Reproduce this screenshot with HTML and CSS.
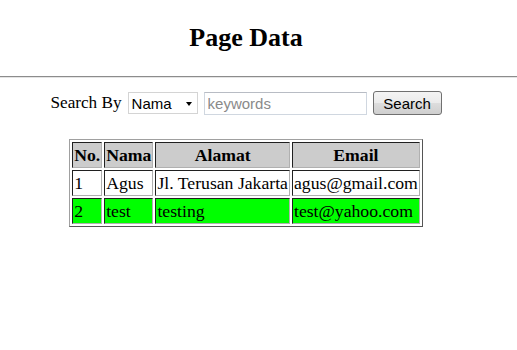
FILE: index.html
```html
<!DOCTYPE html>
<html>
<head>
<meta charset="utf-8">
<title>Page Data</title>
<link rel="stylesheet" href="styles.css">
</head>
<body>
<div class="page">
  <h1 class="title">Page Data</h1>
</div>
<hr class="rule">
<div class="page">
  <form class="search">
    <span class="label">Search By</span>
    <span class="select-wrap">
      <select class="select">
        <option>Nama</option>
        <option>Alamat</option>
        <option>Email</option>
      </select>
      <span class="arrow"></span>
    </span>
    <input class="keywords" type="text" placeholder="keywords">
    <button class="btn" type="button">Search</button>
  </form>
  <table class="data">
    <thead>
      <tr class="head">
        <th>No.</th>
        <th>Nama</th>
        <th>Alamat</th>
        <th>Email</th>
      </tr>
    </thead>
    <tbody>
      <tr class="row">
        <td>1</td>
        <td>Agus</td>
        <td>Jl. Terusan Jakarta</td>
        <td>agus@gmail.com</td>
      </tr>
      <tr class="row alt">
        <td>2</td>
        <td>test</td>
        <td>testing</td>
        <td>test@yahoo.com</td>
      </tr>
    </tbody>
  </table>
</div>
</body>
</html>
```
FILE: styles.css
```css
html, body {
  margin: 0;
  padding: 0;
  background: #fff;
}
body {
  font-family: "Liberation Serif", "Times New Roman", serif;
  font-size: 17px;
  color: #000;
}
.page {
  width: 492px;
  display: flex;
  flex-direction: column;
  align-items: center;
}
.title {
  margin: 0;
  padding-top: 23px;
  font-size: 26px;
  line-height: 30px;
  font-weight: bold;
}
.rule {
  margin: 23px 0 0 0;
  height: 0;
  border: 0;
  border-top: 1px solid #8c8c8c;
  border-bottom: 1px solid #e4e4e4;
}
.search {
  margin: 13px 0 0 0;
  display: flex;
  align-items: center;
  height: 24px;
}
.label {
  margin-right: 6px;
  line-height: 18px;
  font-size: 17.2px;
}
.select-wrap {
  position: relative;
  display: inline-block;
  margin-right: 6px;
}
.select {
  appearance: none;
  -webkit-appearance: none;
  width: 70px;
  height: 22px;
  margin: 0;
  padding: 0 0 0 3px;
  border: 1px solid #d4d4d4;
  border-radius: 0;
  background: #fff;
  font-family: "Liberation Sans", Arial, sans-serif;
  font-size: 15px;
  color: #000;
  display: block;
}
.arrow {
  position: absolute;
  left: 58px;
  top: 10px;
  width: 0;
  height: 0;
  border-left: 3.5px solid transparent;
  border-right: 3.5px solid transparent;
  border-top: 4px solid #000;
}
.keywords {
  width: 163px;
  height: 23px;
  margin: 0 6px 0 0;
  padding: 0 3px;
  box-sizing: border-box;
  border: 1px solid #d0d7e0;
  border-top-color: #b8bcc4;
  font-family: "Liberation Sans", Arial, sans-serif;
  font-size: 15px;
  outline: none;
}
.keywords::placeholder {
  color: #8a8a8a;
}
.btn {
  width: 69px;
  height: 24px;
  margin: 0;
  padding: 0;
  box-sizing: border-box;
  border: 1px solid #707070;
  border-radius: 3px;
  background: linear-gradient(#f4f4f4 0%, #ebebeb 50%, #dddddd 51%, #cfcfcf 100%);
  font-family: "Liberation Sans", Arial, sans-serif;
  font-size: 15px;
  color: #000;
}
.data {
  margin-top: 24px;
  border-collapse: separate;
  border-spacing: 2px;
  border: 1px solid;
  border-color: #a0a0a0 #555555 #555555 #a0a0a0;
  font-size: 17.7px;
}
.data th,
.data td {
  padding: 3px 1px 2px 1px;
  line-height: 19px;
  border: 1px solid;
  border-color: #202020 #b0b0b0 #b0b0b0 #202020;
  white-space: nowrap;
}
.data th {
  background: #cccccc;
  font-weight: bold;
  text-align: center;
}
.data td {
  text-align: left;
}
.row td {
  background: #ffffff;
}
.row.alt td {
  background: #00ff00;
}
```
